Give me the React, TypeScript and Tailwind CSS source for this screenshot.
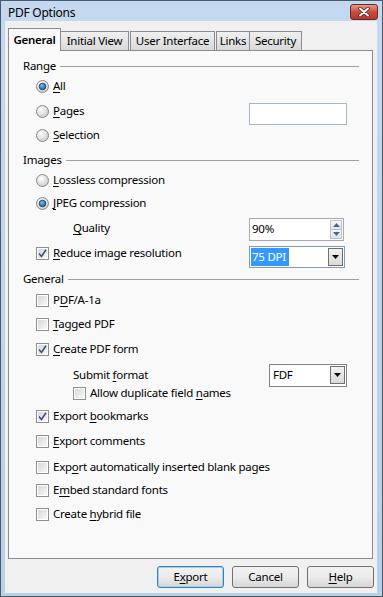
import React from 'react'

function Radio({ checked }: { checked?: boolean }) {
  return (
    <svg width="13" height="13" viewBox="0 0 13 13" className="shrink-0">
      <defs>
        <radialGradient id="rg" cx="40%" cy="35%" r="70%">
          <stop offset="0" stopColor="#ffffff" />
          <stop offset="1" stopColor="#c9c9c9" />
        </radialGradient>
        <radialGradient id="rd" cx="40%" cy="35%" r="70%">
          <stop offset="0" stopColor="#6fc0f5" />
          <stop offset="1" stopColor="#0d5aa1" />
        </radialGradient>
      </defs>
      <circle cx="6.5" cy="6.5" r="6" fill="url(#rg)" stroke="#8a8a8a" />
      {checked && <circle cx="6.5" cy="6.5" r="3.3" fill="url(#rd)" stroke="#1d3a5a" strokeWidth="0.8" />}
    </svg>
  )
}

function Check({ checked }: { checked?: boolean }) {
  return (
    <div className="flex h-[13px] w-[13px] shrink-0 items-center justify-center border border-[#8e8f8f] bg-white">
      <div className="relative h-[9px] w-[9px] bg-gradient-to-br from-[#d8d8d8] to-[#f7f7f7]">
        {checked && (
          <svg width="9" height="9" viewBox="0 0 9 9" className="absolute left-0 top-0">
            <path d="M1 4.5 L3.5 7.5 L8 0.8" fill="none" stroke="#3c4f8a" strokeWidth="1.6" />
          </svg>
        )}
      </div>
    </div>
  )
}

function Section({ title }: { title: string }) {
  return (
    <div className="flex h-4 items-center pl-[14px] pr-[13px]">
      <span>{title}</span>
      <div className="ml-[4px] h-px flex-1 bg-[#a0a0a0]" />
    </div>
  )
}

function Option({
  kind,
  checked,
  indent = 27,
  children,
  className = '',
}: {
  kind: 'radio' | 'check'
  checked?: boolean
  indent?: number
  children: React.ReactNode
  className?: string
}) {
  return (
    <div className={`flex h-4 items-center gap-[4px] ${className}`} style={{ paddingLeft: indent }}>
      {kind === 'radio' ? <Radio checked={checked} /> : <Check checked={checked} />}
      <span className="whitespace-nowrap">{children}</span>
    </div>
  )
}

function DropButton({ className = '' }: { className?: string }) {
  return (
    <div
      className={`flex h-[18px] w-[15px] items-center justify-center border border-[#707070] bg-gradient-to-b from-[#f2f2f2] to-[#d9d9d9] ${className}`}
    >
      <svg width="7" height="4" viewBox="0 0 7 4">
        <path d="M0 0 H7 L3.5 4 Z" fill="#000" />
      </svg>
    </div>
  )
}

function Button({ children, focused }: { children: React.ReactNode; focused?: boolean }) {
  return (
    <div
      className={`flex h-[22px] items-center justify-center rounded-[3px] border bg-gradient-to-b from-[#f2f2f2] via-[#ebebeb] to-[#d6d6d6] ${
        focused ? 'border-[#3c7fb1] shadow-[inset_0_0_0_1px_#9fd1f2]' : 'border-[#707070]'
      }`}
      style={{ width: 67 }}
    >
      {children}
    </div>
  )
}

const u = (s: string) => <span className="underline underline-offset-2">{s}</span>

const tab =
  'flex h-[19px] items-center justify-center border border-b-0 border-[#898c95] bg-gradient-to-b from-[#f0f0f0] to-[#d9d9d9]'

export default function App() {
  return (
    <div className="h-[597px] w-[383px] border border-[#4a5a6c] bg-gradient-to-b from-[#c4d9ef] to-[#b8cfe8] font-['Noto_Sans',sans-serif] text-[11.5px] leading-4 tracking-[-0.25px] text-black">
      <div className="flex h-[20px] items-center justify-between pl-[7px] pr-[4px]">
        <span className="mt-[4px] text-[12px]">PDF Options</span>
        <div className="mt-[1px] flex h-[16px] w-[28px] items-center justify-center rounded-[3px] border border-[#6b2626] bg-gradient-to-b from-[#e59a8c] via-[#c94b3b] to-[#b9362a]">
          <svg width="12" height="10" viewBox="0 0 12 10">
            <path d="M2 1.5 L10 8.5 M10 1.5 L2 8.5" stroke="#5a1a12" strokeWidth="3.6" strokeLinecap="round" />
            <path d="M2 1.5 L10 8.5 M10 1.5 L2 8.5" stroke="#ffffff" strokeWidth="2" strokeLinecap="round" />
          </svg>
        </div>
      </div>

      <div className="pb-[3px] pl-[4px] pr-[5px]">
        <div className="flex h-[572px] flex-col bg-[#f0f0f0] px-[3px] pt-[7px]">
          {/* tabs */}
          <div className="flex h-[22px] items-end">
            <div className="relative z-10 -mb-px flex h-[23px] w-[53px] items-start justify-center border border-b-0 border-[#898c95] bg-[#f9f9f9] pt-[3px] font-semibold">
              General
            </div>
            <div className={`${tab} w-[68px] border-l-0`}>Initial View</div>
            <div className={`${tab} ml-px w-[85px]`}>User Interface</div>
            <div className={`${tab} ml-px w-[34px]`}>Links</div>
            <div className={`${tab} w-[52px] border-l-0`}>Security</div>
          </div>

          {/* panel */}
          <div className="flex h-[509px] w-[365px] flex-col border border-[#898c95] bg-[#f9f9f9] pt-[7px]">
            <Section title="Range" />
            <Option kind="radio" checked className="mt-[4px]">
              {u('A')}ll
            </Option>
            <div className="mt-[9px] flex h-4 items-center">
              <Option kind="radio" className="w-[240px]">
                {u('P')}ages
              </Option>
              <div className="mt-[5px] h-[22px] w-[98px] border border-[#a5b6cc] bg-white" />
            </div>
            <Option kind="radio" className="mt-[8px]">
              {u('S')}election
            </Option>

            <div className="mt-[9px]">
              <Section title="Images" />
            </div>
            <Option kind="radio" className="mt-[4px]">
              {u('L')}ossless compression
            </Option>
            <Option kind="radio" checked className="mt-[7px]">
              {u('J')}PEG compression
            </Option>
            <div className="mt-[9px] flex h-4 items-center">
              <div className="w-[240px] pl-[64px]">{u('Q')}uality</div>
              <div className="mt-[2px] flex h-[23px] w-[95px] items-center justify-between border border-[#a4a9b0] bg-white pl-[2px] pr-[1px]">
                <span>90%</span>
                <div className="flex h-[19px] w-[12px] flex-col">
                  <div className="flex flex-1 items-center justify-center border border-[#b9c1cc] bg-gradient-to-b from-[#f4f6f9] to-[#dfe5ec]">
                    <svg width="7" height="4" viewBox="0 0 7 4">
                      <path d="M0 4 H7 L3.5 0 Z" fill="#4e6591" />
                    </svg>
                  </div>
                  <div className="flex flex-1 items-center justify-center border border-t-0 border-[#b9c1cc] bg-gradient-to-b from-[#f4f6f9] to-[#dfe5ec]">
                    <svg width="7" height="4" viewBox="0 0 7 4">
                      <path d="M0 0 H7 L3.5 4 Z" fill="#4e6591" />
                    </svg>
                  </div>
                </div>
              </div>
            </div>
            <div className="mt-[9px] flex h-4 items-center">
              <Option kind="check" checked className="w-[240px]">
                {u('R')}educe image resolution
              </Option>
              <div className="mt-[7px] flex h-[22px] w-[96px] items-center justify-between border border-[#7f9db9] bg-white pl-[1px] pr-[1px]">
                <span className="flex h-[18px] w-[38px] items-center bg-[#3399ff] pl-[1px] text-white">75 DPI</span>
                <DropButton />
              </div>
            </div>

            <div className="mt-[10px]">
              <Section title="General" />
            </div>
            <Option kind="check" className="mt-[5px]">
              P{u('D')}F/A-1a
            </Option>
            <Option kind="check" className="mt-[8px]">
              {u('T')}agged PDF
            </Option>
            <Option kind="check" checked className="mt-[9px]">
              {u('C')}reate PDF form
            </Option>
            <div className="mt-[10px] flex h-4 items-center">
              <div className="w-[260px] pl-[64px]">Submit {u('f')}ormat</div>
              <div className="flex h-[23px] w-[78px] items-center justify-between border border-[#838383] bg-white pl-[3px] pr-[1px]">
                <span>FDF</span>
                <DropButton className="border-[#555]" />
              </div>
            </div>
            <Option kind="check" indent={64} className="mt-[2px]">
              Allow duplicate field {u('n')}ames
            </Option>
            <Option kind="check" checked className="mt-[7px]">
              Export {u('b')}ookmarks
            </Option>
            <Option kind="check" className="mt-[9px]">
              {u('E')}xport comments
            </Option>
            <Option kind="check" className="mt-[10px]">
              Exp{u('o')}rt automatically inserted blank pages
            </Option>
            <Option kind="check" className="mt-[7px]">
              E{u('m')}bed standard fonts
            </Option>
            <Option kind="check" className="mt-[8px]">
              Create {u('h')}ybrid file
            </Option>
          </div>

          {/* buttons */}
          <div className="mt-[7px] flex justify-end gap-[8px]">
            <Button focused>
              E{u('x')}port
            </Button>
            <Button>Cancel</Button>
            <Button>{u('H')}elp</Button>
          </div>
        </div>
      </div>
    </div>
  )
}
